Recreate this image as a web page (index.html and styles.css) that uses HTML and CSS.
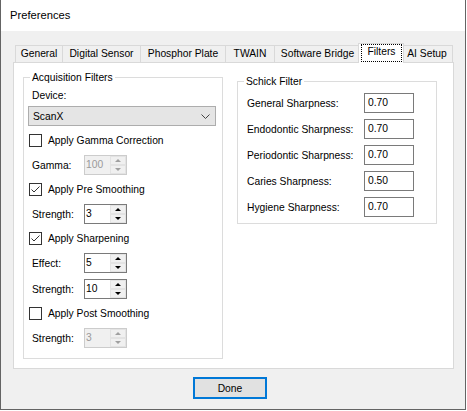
FILE: index.html
```html
<!DOCTYPE html>
<html>
<head>
<meta charset="utf-8">
<title>Preferences</title>
<link rel="stylesheet" href="styles.css">
</head>
<body>
<div class="window">
  <div class="titlebar">Preferences</div>
  <div class="client">
    <div class="tabs">
      <div class="tab w-general">General</div>
      <div class="tab w-digital">Digital Sensor</div>
      <div class="tab w-phosphor">Phosphor Plate</div>
      <div class="tab w-twain">TWAIN</div>
      <div class="tab w-bridge">Software Bridge</div>
      <div class="tab selected w-filters"><span class="focus">Filters</span></div>
      <div class="tab w-ai">AI Setup</div>
    </div>
    <div class="page">
      <fieldset class="group acq">
        <legend>Acquisition Filters</legend>
        <div class="content">
          <div class="lbl row-label">Device:</div>
          <div class="combo">
            <span>ScanX</span>
            <svg class="chev" width="9" height="5" viewBox="0 0 9 5"><polyline points="0.5,0.5 4.5,4.5 8.5,0.5" fill="none" stroke="#444" stroke-width="1"/></svg>
          </div>
          <div class="chk"><span class="box"></span><span class="ctext">Apply Gamma Correction</span></div>
          <div class="spinrow">
            <span class="lbl">Gamma:</span>
            <div class="spin disabled"><span class="val">100</span><span class="btns"><span class="up"></span><span class="down"></span></span></div>
          </div>
          <div class="chk"><span class="box checked"><svg width="11" height="11" viewBox="0 0 11 11"><polyline points="1.5,5.5 4,8 9.5,2.5" fill="none" stroke="#333" stroke-width="1"/></svg></span><span class="ctext">Apply Pre Smoothing</span></div>
          <div class="spinrow">
            <span class="lbl">Strength:</span>
            <div class="spin"><span class="val">3</span><span class="btns"><span class="up"></span><span class="down"></span></span></div>
          </div>
          <div class="chk"><span class="box checked"><svg width="11" height="11" viewBox="0 0 11 11"><polyline points="1.5,5.5 4,8 9.5,2.5" fill="none" stroke="#333" stroke-width="1"/></svg></span><span class="ctext">Apply Sharpening</span></div>
          <div class="spinrow">
            <span class="lbl">Effect:</span>
            <div class="spin"><span class="val">5</span><span class="btns"><span class="up"></span><span class="down"></span></span></div>
          </div>
          <div class="spinrow tight">
            <span class="lbl">Strength:</span>
            <div class="spin"><span class="val">10</span><span class="btns"><span class="up"></span><span class="down"></span></span></div>
          </div>
          <div class="chk"><span class="box"></span><span class="ctext">Apply Post Smoothing</span></div>
          <div class="spinrow">
            <span class="lbl">Strength:</span>
            <div class="spin disabled"><span class="val">3</span><span class="btns"><span class="up"></span><span class="down"></span></span></div>
          </div>
        </div>
      </fieldset>
      <fieldset class="group schick">
        <legend>Schick Filter</legend>
        <div class="content">
          <div class="field"><span class="flabel">General Sharpness:</span><div class="textbox">0.70</div></div>
          <div class="field"><span class="flabel">Endodontic Sharpness:</span><div class="textbox">0.70</div></div>
          <div class="field"><span class="flabel">Periodontic Sharpness:</span><div class="textbox">0.70</div></div>
          <div class="field"><span class="flabel">Caries Sharpness:</span><div class="textbox">0.50</div></div>
          <div class="field"><span class="flabel">Hygiene Sharpness:</span><div class="textbox">0.70</div></div>
        </div>
      </fieldset>
    </div>
    <div class="footer"><button class="done">Done</button></div>
  </div>
</div>
</body>
</html>
```

FILE: styles.css
```css
html, body {
  margin: 0;
  padding: 0;
  background: #ffffff;
}
body {
  font-family: "Liberation Sans", Arial, sans-serif;
  font-size: 10.3px;
  color: #000;
}
.window {
  width: 466px;
  height: 410px;
  box-sizing: border-box;
  border: 1px solid #646464;
  border-top: none;
  background: #f0f0f0;
  display: flex;
  flex-direction: column;
}
.titlebar {
  height: 31px;
  line-height: 31px;
  background: #fff;
  padding-left: 9px;
  font-size: 11.2px;
  flex: none;
}
.client {
  flex: 1;
  padding-top: 12px;
}
/* tabs */
.tabs {
  display: flex;
  align-items: flex-end;
  height: 19px;
  margin-left: 14px;
}
.tab {
  box-sizing: border-box;
  height: 17px;
  line-height: 15px;
  border: 1px solid #d9d9d9;
  border-bottom: none;
  background: #f0f0f0;
  text-align: center;
  margin-left: -1px;
  white-space: nowrap;
}
.w-general { width: 48px; margin-left: 0; }
.w-digital { width: 79px; }
.w-phosphor { width: 86px; }
.w-twain { width: 50px; }
.w-bridge { width: 87px; }
.w-filters { width: 46px; margin-left: -3px; }
.w-ai { width: 52px; margin-left: -3px; }
.tab.selected {
  height: 20px;
  margin-bottom: -1px;
  background: #fff;
  position: relative;
  z-index: 1;
  padding: 0 1px 0 2px;
}
.focus {
  display: block;
  box-sizing: border-box;
  height: 18px;
  line-height: 14px;
  border: 1px dotted #000;
}
/* page */
.page {
  box-sizing: border-box;
  width: 441px;
  height: 307px;
  margin-left: 12px;
  border: 1px solid #d9d9d9;
  background: #fff;
  display: flex;
  align-items: flex-start;
}
.group {
  box-sizing: border-box;
  margin: 0;
  padding: 0;
  min-width: 0;
  width: 200px;
  border: 1px solid #dcdcdc;
}
.group legend {
  margin-left: 6px;
  padding: 0 2px;
  line-height: 13px;
  height: 13px;
}
.acq {
  margin-top: 8px;
  margin-left: 9px;
  height: 288px;
}
.schick {
  margin-top: 12px;
  margin-left: 14px;
  height: 149px;
}
.acq .content {
  display: flex;
  flex-direction: column;
  padding: 5px 0 0 4px;
}
.row-label {
  height: 13px;
  line-height: 13px;
  padding-left: 4px;
}
.combo {
  margin-top: 4px;
  box-sizing: border-box;
  width: 188px;
  height: 20px;
  border: 1px solid #adadad;
  background: #e5e5e5;
  display: flex;
  align-items: center;
  justify-content: space-between;
  padding: 0 5px 0 4px;
}
.chev { display: block; }
.chk {
  margin-top: 8px;
  height: 13px;
  display: flex;
  align-items: center;
}
.box {
  box-sizing: border-box;
  width: 13px;
  height: 13px;
  margin-left: 1px;
  border: 1px solid #333;
  background: #fff;
  flex: none;
}
.box svg { display: block; }
.ctext {
  margin-left: 6px;
  line-height: 13px;
}
.spinrow {
  margin-top: 8px;
  height: 20px;
  display: flex;
  align-items: center;
}
.spinrow.tight { margin-top: 6px; }
.lbl {
  box-sizing: border-box;
  width: 56px;
  padding-left: 4px;
}
.spin {
  box-sizing: border-box;
  width: 43px;
  height: 20px;
  border: 1px solid #7a7a7a;
  background: #fff;
  display: flex;
}
.spin .val {
  flex: 1;
  padding-left: 1px;
  line-height: 18px;
}
.btns {
  width: 16px;
  display: flex;
  flex-direction: column;
}
.btns .up, .btns .down {
  flex: 1;
  box-sizing: border-box;
  background: #f0f0f0;
  border: 1px solid #e3e3e3;
  display: flex;
  align-items: center;
  justify-content: center;
}
.btns .up::after {
  content: "";
  border-left: 3px solid transparent;
  border-right: 3px solid transparent;
  border-bottom: 3px solid #000;
}
.btns .down::after {
  content: "";
  border-left: 3px solid transparent;
  border-right: 3px solid transparent;
  border-top: 3px solid #000;
}
.spin.disabled {
  border-color: #cccccc;
  background: #f0f0f0;
}
.spin.disabled .val { color: #9a9a9a; }
.spin.disabled .btns .up::after { border-bottom-color: #a0a0a0; }
.spin.disabled .btns .down::after { border-top-color: #a0a0a0; }
/* schick */
.schick .content {
  display: flex;
  flex-direction: column;
  gap: 6px;
  padding: 5px 0 0 9px;
}
.field {
  display: flex;
  align-items: center;
  height: 20px;
}
.flabel {
  width: 117px;
}
.textbox {
  box-sizing: border-box;
  width: 50px;
  height: 20px;
  line-height: 18px;
  border: 1px solid #7a7a7a;
  padding-left: 3px;
  background: #fff;
}
/* footer */
.footer {
  padding-top: 8px;
}
.done {
  margin: 0 0 0 192px;
  box-sizing: border-box;
  width: 74px;
  height: 22px;
  border: 2px solid #0078d7;
  background: #e1e1e1;
  font-family: "Liberation Sans", Arial, sans-serif;
  font-size: 10.3px;
  color: #000;
  padding: 0;
  display: block;
}
```
